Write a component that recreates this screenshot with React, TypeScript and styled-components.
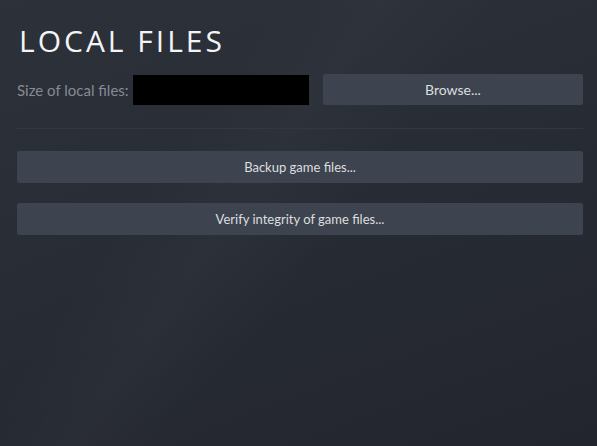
import { createGlobalStyle, styled } from 'styled-components'

const GlobalStyle = createGlobalStyle`
  html, body {
    margin: 0;
    padding: 0;
    height: 100%;
  }
  body {
    background: #262a32;
    font-family: Lato, "Open Sans", sans-serif;
  }
  #root {
    height: 100%;
  }
`

const Page = styled.div`
  min-height: 446px;
  box-sizing: border-box;
  padding: 24px 14px 0 17px;
  display: flex;
  flex-direction: column;
  background:
    linear-gradient(125deg, rgba(255, 255, 255, 0) 30%, rgba(255, 255, 255, 0.018) 42%, rgba(255, 255, 255, 0) 55%),
    linear-gradient(160deg, #2d313a 0%, #282c35 45%, #22252d 100%);
`

const Title = styled.h1`
  margin: 0 0 16px 2px;
  font-family: "Open Sans", sans-serif;
  font-weight: 400;
  font-size: 30px;
  line-height: 34px;
  letter-spacing: 3px;
  color: #f3f4f5;
`

const SizeRow = styled.div`
  display: flex;
  align-items: center;
  height: 31px;
`

const Label = styled.span`
  width: 116px;
  font-family: Lato, sans-serif;
  font-size: 15px;
  color: #858b93;
  white-space: nowrap;
`

const Redacted = styled.div`
  width: 176px;
  height: 30px;
  background: #000;
  margin-right: 14px;
`

const Button = styled.button<{ $grow?: boolean }>`
  flex: ${(p) => (p.$grow ? '1' : 'none')};
  width: ${(p) => (p.$grow ? 'auto' : '100%')};
  height: ${(p) => (p.$grow ? '31px' : '32px')};
  border: none;
  border-radius: 2px;
  background: #3d4450;
  color: #dcdedf;
  font-family: Lato, sans-serif;
  font-size: ${(p) => (p.$grow ? '14px' : '13px')};
  cursor: pointer;
  padding: 0;
`

const Divider = styled.hr`
  border: none;
  border-top: 1px solid #33373f;
  margin: 23px 0 22px;
`

const Stack = styled.div`
  display: flex;
  flex-direction: column;
  gap: 20px;
`

export default function App() {
  return (
    <>
      <GlobalStyle />
      <Page>
        <Title>LOCAL FILES</Title>
        <SizeRow>
          <Label>Size of local files:</Label>
          <Redacted />
          <Button $grow>Browse...</Button>
        </SizeRow>
        <Divider />
        <Stack>
          <Button>Backup game files...</Button>
          <Button>Verify integrity of game files...</Button>
        </Stack>
      </Page>
    </>
  )
}
